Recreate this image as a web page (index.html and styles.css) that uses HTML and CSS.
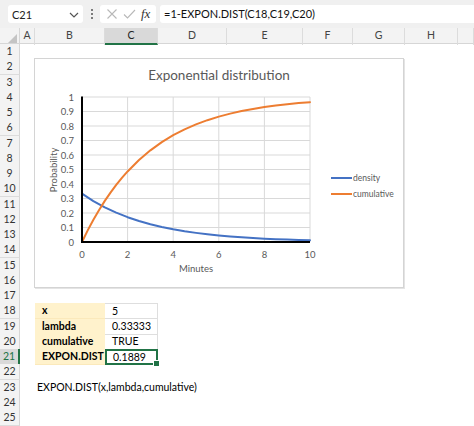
FILE: index.html
```html
<!DOCTYPE html>
<html>
<head>
<meta charset="utf-8">
<link rel="stylesheet" href="styles.css">
</head>
<body>
<div class="app">
  <div class="fbar">
    <div class="namebox">
      <span class="nb-text">C21</span>
      <svg class="chev" width="10" height="6" viewBox="0 0 10 6"><path d="M1 1 L5 5 L9 1" fill="none" stroke="#555" stroke-width="1.2"/></svg>
    </div>
    <div class="vdots">
      <svg width="4" height="12" viewBox="0 0 4 12"><circle cx="2" cy="2" r="1"/><circle cx="2" cy="6" r="1"/><circle cx="2" cy="10" r="1"/></svg>
    </div>
    <div class="fnbox">
      <svg width="12" height="12" viewBox="0 0 12 12"><path d="M1.5 1.5 L10.5 10.5 M10.5 1.5 L1.5 10.5" stroke="#b8b8b8" stroke-width="1.1" fill="none"/></svg>
      <svg width="13" height="12" viewBox="0 0 13 12"><path d="M1 6.5 L4.5 10 L12 2" stroke="#b8b8b8" stroke-width="1.1" fill="none"/></svg>
      <span class="fx">fx</span>
    </div>
    <div class="formula">=1-EXPON.DIST(C18,C19,C20)</div>
  </div>

  <div class="sheet">
    <div class="hrow">
      <div class="corner"><svg width="9" height="9" viewBox="0 0 9 9"><path d="M9 0 L9 9 L0 9 Z" fill="#c4c4c4"/></svg></div>
      <div class="ch">A</div><div class="ch">B</div><div class="ch sel">C</div><div class="ch">D</div><div class="ch">E</div><div class="ch">F</div><div class="ch">G</div><div class="ch">H</div><div class="ch"></div>
    </div>
    <div class="row"><div class="rh">1</div></div>
    <div class="row"><div class="rh">2</div></div>
    <div class="row"><div class="rh">3</div></div>
    <div class="row"><div class="rh">4</div></div>
    <div class="row"><div class="rh">5</div></div>
    <div class="row"><div class="rh">6</div></div>
    <div class="row"><div class="rh">7</div></div>
    <div class="row"><div class="rh">8</div></div>
    <div class="row"><div class="rh">9</div></div>
    <div class="row"><div class="rh">10</div></div>
    <div class="row"><div class="rh">11</div></div>
    <div class="row"><div class="rh">12</div></div>
    <div class="row"><div class="rh">13</div></div>
    <div class="row"><div class="rh">14</div></div>
    <div class="row"><div class="rh">15</div></div>
    <div class="row"><div class="rh">16</div></div>
    <div class="row"><div class="rh">17</div></div>
    <div class="row"><div class="rh">18</div><div></div><div class="lbl">x</div><div class="val">5</div></div>
    <div class="row"><div class="rh">19</div><div></div><div class="lbl">lambda</div><div class="val">0.33333</div></div>
    <div class="row"><div class="rh">20</div><div></div><div class="lbl">cumulative</div><div class="val">TRUE</div></div>
    <div class="row"><div class="rh rsel">21</div><div></div><div class="lbl">EXPON.DIST</div><div class="val active">0.1889<span class="handle"></span></div></div>
    <div class="row"><div class="rh">22</div></div>
    <div class="row"><div class="rh">23</div><div></div><div class="note">EXPON.DIST(x,lambda,cumulative)</div></div>
    <div class="row"><div class="rh">24</div></div>
    <div class="row"><div class="rh">25</div></div>

    <div class="chart">
      <svg width="370" height="230" viewBox="0 0 370 230">
        <text class="title" x="185" y="22" text-anchor="middle">Exponential distribution</text>
        <g stroke="#d9d9d9" stroke-width="1">
          <path d="M48 169.5 H276 M48 155 H276 M48 140.5 H276 M48 126 H276 M48 111.5 H276 M48 97 H276 M48 82.5 H276 M48 68 H276 M48 53.5 H276 M48 39 H276"/>
          <path d="M93.6 39 V184 M139.2 39 V184 M184.8 39 V184 M230.4 39 V184 M276 39 V184"/>
        </g>
        <g class="ylab" text-anchor="end">
          <text x="40" y="187.5">0</text>
          <text x="40" y="173">0.1</text>
          <text x="40" y="158.5">0.2</text>
          <text x="40" y="144">0.3</text>
          <text x="40" y="129.5">0.4</text>
          <text x="40" y="115">0.5</text>
          <text x="40" y="100.5">0.6</text>
          <text x="40" y="86">0.7</text>
          <text x="40" y="71.5">0.8</text>
          <text x="40" y="57">0.9</text>
          <text x="40" y="42.5">1</text>
        </g>
        <g class="ylab" text-anchor="middle">
          <text x="48" y="200">0</text>
          <text x="93.6" y="200">2</text>
          <text x="139.2" y="200">4</text>
          <text x="184.8" y="200">6</text>
          <text x="230.4" y="200">8</text>
          <text x="276" y="200">10</text>
        </g>
        <text class="axt" x="162" y="214" text-anchor="middle">Minutes</text>
        <text class="axt" x="0" y="0" text-anchor="middle" transform="translate(23 112) rotate(-90)">Probability</text>
        <g transform="translate(48 184) scale(22.8 -145)" fill="none" stroke-linejoin="round" stroke-linecap="round">
          <path vector-effect="non-scaling-stroke" stroke="#4472c4" stroke-width="2" d="M0 0.3333 L0.5 0.2822 L1 0.2388 L1.5 0.2022 L2 0.1711 L2.5 0.1449 L3 0.1226 L3.5 0.1038 L4 0.0879 L4.5 0.0744 L5 0.0630 L5.5 0.0533 L6 0.0451 L6.5 0.0382 L7 0.0323 L7.5 0.0274 L8 0.0232 L8.5 0.0196 L9 0.0166 L9.5 0.0140 L10 0.0119"/>
          <path vector-effect="non-scaling-stroke" stroke="#ed7d31" stroke-width="2" d="M0 0 L0.25 0.0800 L0.5 0.1535 L0.75 0.2212 L1 0.2835 L1.25 0.3408 L1.5 0.3935 L1.75 0.4420 L2 0.4866 L2.5 0.5654 L3 0.6321 L3.5 0.6886 L4 0.7364 L4.5 0.7769 L5 0.8111 L5.5 0.8401 L6 0.8647 L6.5 0.8854 L7 0.9030 L7.5 0.9179 L8 0.9305 L8.5 0.9412 L9 0.9502 L9.5 0.9579 L10 0.9643"/>
        </g>
        <g stroke="#000" stroke-width="2">
          <path d="M48 38.5 V185"/>
          <path d="M47 184 H276"/>
        </g>
        <path d="M297 120 H318" stroke="#4472c4" stroke-width="2"/>
        <path d="M297 136 H318" stroke="#ed7d31" stroke-width="2"/>
        <text class="leg" x="319" y="123">density</text>
        <text class="leg" x="319" y="139">cumulative</text>
      </svg>
    </div>
  </div>
</div>
</body>
</html>
```

FILE: styles.css
```css
html, body {
  margin: 0;
  padding: 0;
  background: #ffffff;
}
body {
  font-family: Lato, "Open Sans", "Liberation Sans", sans-serif;
  color: #000;
  width: 474px;
  height: 426px;
  overflow: hidden;
}
.app {
  width: 474px;
}
.fbar {
  height: 28px;
  background: #f0f0f0;
  display: flex;
  align-items: center;
  padding-left: 8px;
  box-sizing: border-box;
}
.namebox {
  width: 75px;
  height: 18px;
  background: #fff;
  border-radius: 3px;
  box-sizing: border-box;
  display: flex;
  align-items: center;
  justify-content: space-between;
  padding: 0 4px 0 4px;
  font-size: 11px;
  color: #222;
}
.chev { margin-top: 1px; }
.vdots {
  width: 17px;
  display: flex;
  justify-content: center;
  fill: #555;
}
.fnbox {
  width: 56px;
  height: 18px;
  background: #fff;
  border-radius: 3px;
  display: flex;
  align-items: center;
  justify-content: space-around;
  padding: 0 3px;
  box-sizing: border-box;
}
.fx {
  font-family: "Liberation Serif", "DejaVu Serif", serif;
  font-style: italic;
  font-size: 13px;
  color: #333;
}
.formula {
  margin-left: 4px;
  flex: 1;
  height: 18px;
  background: #fff;
  border-radius: 3px 0 0 3px;
  font-size: 11px;
  line-height: 18px;
  padding-left: 4px;
  color: #111;
}
.sheet {
  position: relative;
  --cols: 20px 15px 70px 53px 69px 76px 50px 52px 53px 16px;
}
.hrow {
  display: grid;
  grid-template-columns: var(--cols);
  height: 16px;
  background: #f3f3f3;
  border-bottom: 1px solid #d6d6d6;
  box-sizing: border-box;
}
.corner {
  display: flex;
  align-items: flex-end;
  justify-content: flex-end;
  padding: 0 2px 2px 0;
  border-right: 1px solid #d6d6d6;
}
.ch {
  font-size: 10.5px;
  color: #444;
  text-align: center;
  line-height: 15px;
  border-right: 1px solid #dcdcdc;
}
.ch.sel {
  background: #d9d9d9;
  border-bottom: 2px solid #217346;
  line-height: 15px;
  color: #222;
}
.row {
  display: grid;
  grid-template-columns: var(--cols);
  height: 15.25px;
}
.rh {
  background: #f3f3f3;
  font-size: 10.5px;
  color: #333;
  text-align: center;
  line-height: 15px;
  border-bottom: 1px solid #dcdcdc;
  border-right: 1px solid #d6d6d6;
  box-sizing: border-box;
}
.rh.rsel {
  background: #d9d9d9;
  border-right: 2px solid #217346;
  color: #217346;
}
.lbl {
  background: #fff2cc;
  font-weight: bold;
  font-size: 10.5px;
  line-height: 15px;
  padding-left: 7px;
  border-bottom: 1px solid #fbe9bb;
  box-sizing: border-box;
}
.val {
  font-size: 10.5px;
  line-height: 14px;
  padding-left: 7px;
  border: 1px solid #dedede;
  border-top: none;
  border-left: none;
  box-sizing: border-box;
  position: relative;
}
.row:nth-child(19) .val { border-top: 1px solid #dedede; }
.val.active {
  border: 2px solid #217346;
  line-height: 11px;
  padding-left: 6px;
  padding-top: 1px;
}
.handle {
  position: absolute;
  right: -4px;
  bottom: -4px;
  width: 5px;
  height: 5px;
  background: #217346;
  border: 1px solid #fff;
}
.note {
  grid-column: span 3;
  font-size: 10.5px;
  line-height: 15px;
  padding-left: 2px;
  white-space: nowrap;
}
.chart {
  position: absolute;
  left: 34px;
  top: 30px;
  width: 370px;
  height: 230px;
  background: #fff;
  border: 1px solid #d4d4d4;
  box-shadow: 1px 1px 0 #e4e4e4;
  box-sizing: border-box;
}
.chart svg {
  position: absolute;
  left: -1px;
  top: -1px;
}
.title {
  font-family: Lato, "Open Sans", sans-serif;
  font-size: 13.5px;
  fill: #595959;
}
.ylab text {
  font-family: Lato, "Open Sans", sans-serif;
  font-size: 9.5px;
  fill: #595959;
}
.axt {
  font-family: Lato, "Open Sans", sans-serif;
  font-size: 9.5px;
  fill: #595959;
}
.leg {
  font-family: Lato, "Open Sans", sans-serif;
  font-size: 8.5px;
  fill: #595959;
}
```
